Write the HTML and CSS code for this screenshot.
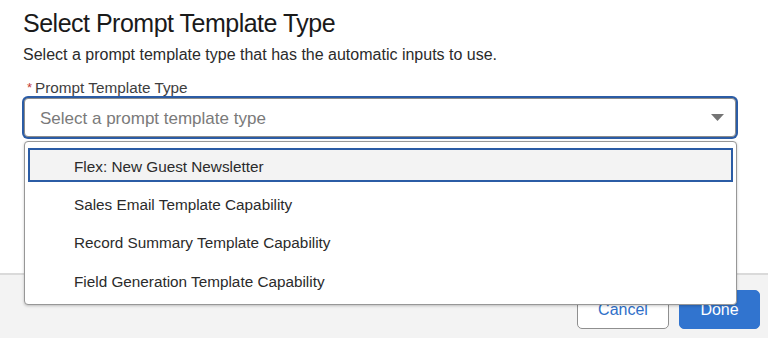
FILE: index.html
```html
<!DOCTYPE html>
<html lang="en">
<head>
<meta charset="utf-8">
<title>Select Prompt Template Type</title>
<link rel="stylesheet" href="styles.css">
</head>
<body>
<div class="modal">
  <div class="modal-body">
    <h2 class="title">Select Prompt Template Type</h2>
    <p class="desc">Select a prompt template type that has the automatic inputs to use.</p>
    <div class="field">
      <label class="label"><abbr class="req">*</abbr>Prompt Template Type</label>
      <div class="combobox">
        <div class="input">
          <span class="placeholder">Select a prompt template type</span>
          <svg class="caret" width="13" height="7" viewBox="0 0 13 7"><path d="M0 0 H13 L6.5 7 Z" fill="#747474"/></svg>
        </div>
        <ul class="menu">
          <li class="item active">Flex: New Guest Newsletter</li>
          <li class="item">Sales Email Template Capability</li>
          <li class="item">Record Summary Template Capability</li>
          <li class="item">Field Generation Template Capability</li>
        </ul>
      </div>
    </div>
  </div>
  <div class="modal-footer">
    <button class="btn btn-neutral">Cancel</button>
    <button class="btn btn-brand">Done</button>
  </div>
</div>
</body>
</html>
```
FILE: styles.css
```css
html, body {
  margin: 0;
  padding: 0;
  background: #ffffff;
  font-family: "Liberation Sans", Arial, sans-serif;
  color: #181818;
}

.modal {
  width: 768px;
  height: 338px;
  overflow: hidden;
  display: flex;
  flex-direction: column;
}

.modal-body {
  min-height: 273px;
  box-sizing: border-box;
  padding: 8px 32px 0 23px;
}

.title {
  margin: 0;
  font-size: 25px;
  line-height: 30px;
  font-weight: 400;
  letter-spacing: -0.5px;
  color: #1a1a1a;
}

.desc {
  margin: 6.5px 0 0;
  font-size: 16px;
  line-height: 20px;
  color: #2b2b2b;
}

.field {
  margin-top: 14.9px;
}

.label {
  display: block;
  padding-left: 4px;
  font-size: 15.3px;
  line-height: 18px;
  color: #3e3e3e;
  margin-bottom: 0.6px;
}

.req {
  color: #c23934;
  text-decoration: none;
  font-size: 13px;
  margin-right: 3px;
  vertical-align: 1px;
}

.combobox {
  position: relative;
  margin: 0 0 0 1px;
}

.input {
  height: 39px;
  box-sizing: border-box;
  border: 1px solid #8c8c8c;
  border-radius: 4px;
  box-shadow: 0 0 0 2px #2b5ca5;
  background: #fff;
  display: flex;
  align-items: center;
  padding: 3px 11px 0 15px;
}

.placeholder {
  flex: 1;
  font-size: 17px;
  color: #7a7a7a;
}

.caret {
  display: block;
  margin-top: -2px;
}

.menu {
  position: absolute;
  top: calc(100% + 4px);
  left: 0;
  right: -1px;
  margin: 0;
  padding: 6px 0 2.1px;
  list-style: none;
  background: #fff;
  border: 1px solid #979797;
  border-radius: 4px;
  box-shadow: 0 1px 3px rgba(0, 0, 0, 0.22);
  z-index: 10;
}

.item {
  margin: 0 3px;
  padding-left: 46px;
  height: 38.7px;
  line-height: 38.7px;
  font-size: 15.3px;
  color: #2b2b2b;
}

.item.active {
  height: 34px;
  box-sizing: border-box;
  line-height: 30px;
  padding-top: 4px;
  margin-bottom: 3.8px;
  background: #f3f3f3;
  box-shadow: inset 0 0 0 2px #2b5ca5;
}

.modal-footer {
  flex: 1;
  background: #f3f3f3;
  border-top: 2px solid #dadada;
  display: flex;
  justify-content: flex-end;
  align-items: flex-start;
  gap: 10px;
  padding: 15px 8px 0 0;
}

.btn {
  height: 39px;
  border-radius: 5px;
  font-family: "Liberation Sans", Arial, sans-serif;
  font-size: 16px;
  padding: 1px 0 0;
  cursor: pointer;
}

.btn-neutral {
  width: 92px;
  background: #fff;
  border: 1px solid #8f8f8f;
  color: #2f6fc8;
}

.btn-brand {
  width: 81px;
  background: #3174cf;
  border: 1px solid #3174cf;
  color: #fff;
}
```
